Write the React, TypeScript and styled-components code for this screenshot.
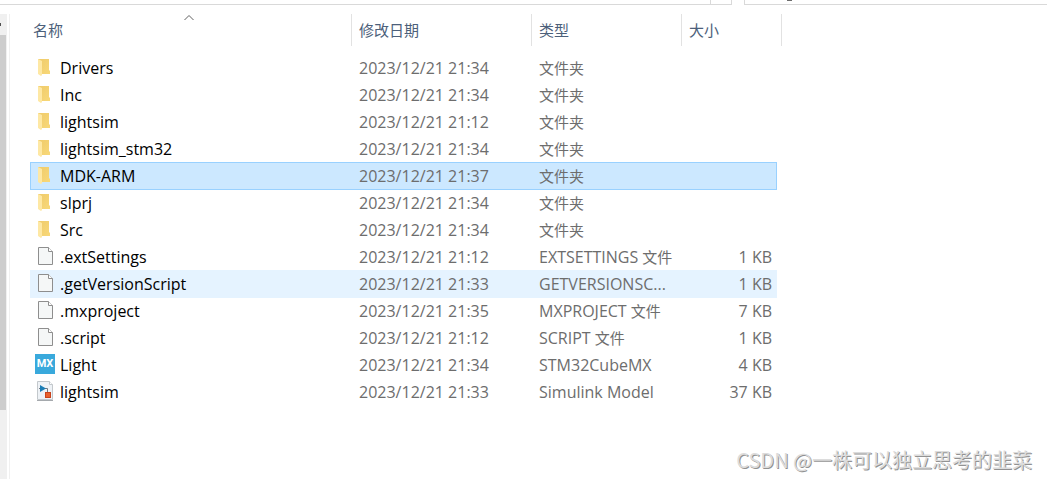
import React from "react";
import styled, { createGlobalStyle } from "styled-components";

const GlobalStyle = createGlobalStyle`
  * { box-sizing: border-box; }
  body {
    margin: 0;
    background: #fff;
    font-family: "Open Sans", "Noto Sans CJK SC", sans-serif;
    font-size: 15px;
    line-height: 20px;
  }
`;

const Explorer = styled.div`
  display: flex;
  flex-direction: column;
  min-height: 100vh;
  background: #fff;
`;

const TopBar = styled.header`
  display: flex;
  gap: 12px;
  height: 5px;
  margin-bottom: 9px;
`;

const AddressBox = styled.div`
  display: flex;
  justify-content: flex-end;
  flex: 0 0 732px;
  border: solid #d9d9d9;
  border-width: 0 1px 1px 0;
`;

const RefreshSlot = styled.div`
  width: 21px;
  border-left: 1px solid #d9d9d9;
`;

const SearchBox = styled.div`
  flex: 1;
  padding-left: 42px;
  border: solid #d9d9d9;
  border-width: 0 0 1px 1px;
`;

const SearchMark = styled.svg`
  display: block;
`;

const Body = styled.div`
  display: flex;
  flex: 1;
`;

const ScrollTrack = styled.div`
  display: flex;
  flex-direction: column;
  width: 7px;
  padding-right: 1px;
  background: #f0f0f0;
`;

const ScrollArrow = styled.div`
  display: flex;
  align-items: center;
  height: 21px;
`;

const ScrollThumb = styled.div`
  height: 375px;
  background: #cdcdcd;
`;

const Pane = styled.main`
  flex: 1;
  min-width: 0;
  margin-left: 2px;
  padding-left: 16px;
  border-left: 1px solid #f0f0f0;
`;

const Table = styled.table`
  width: 756px;
  table-layout: fixed;
  border-collapse: separate;
  border-spacing: 0;
`;

const Column = styled.col<{ $width: number }>`
  width: ${(p) => p.$width}px;
`;

const HeadCell = styled.th`
  position: relative;
  height: 32px;
  padding: 0 7px;
  border-right: 1px solid #e2e2e2;
  color: #4c607a;
  font-weight: 400;
  text-align: left;
`;

const SortMark = styled.svg`
  position: absolute;
  top: 0;
  left: 50%;
  transform: translateX(-50%);
`;

const Spacer = styled.tr`
  height: 8px;
`;

type RowState = "plain" | "selected" | "hover";

const Cell = styled.td<{ $align?: "right" }>`
  padding: 0 5px 0 7px;
  color: #6d6d6d;
  font-size: 16px;
  text-align: ${(p) => p.$align ?? "left"};
  white-space: nowrap;
`;

const NameCell = styled(Cell)`
  padding: 0 5px;
  color: #000;
`;

const rowLooks: Record<RowState, string> = {
  plain: "",
  hover: `
    ${Cell} { background: #e5f3ff; box-shadow: 0 1px #e5f3ff; }
  `,
  selected: `
    ${Cell} { background: #cce8ff; box-shadow: inset 0 1px #99d1ff, 0 1px #99d1ff; }
    ${NameCell} { box-shadow: inset 1px 1px #99d1ff, 0 1px #99d1ff; }
    ${Cell}:last-child { box-shadow: inset -1px 1px #99d1ff, 0 1px #99d1ff; }
  `,
};

const Row = styled.tr<{ $state: RowState }>`
  height: 27px;
  ${(p) => rowLooks[p.$state]}
`;

const EdgeCell = styled.td`
  padding: 0;
`;

const Han = styled.span`
  font-size: 15px;
`;

const NameLine = styled.div`
  display: flex;
  align-items: center;
  gap: 5px;
`;

const IconSlot = styled.span`
  display: flex;
  width: 20px;
  height: 20px;
  margin-bottom: 2px;
`;

const MxBadge = styled.span`
  width: 20px;
  height: 20px;
  background: #39a9dc;
  color: #fff;
  font: 700 11px/19px Roboto, sans-serif;
  text-align: center;
`;

const Watermark = styled.div`
  position: absolute;
  right: 15px;
  bottom: 5px;
  color: #dcdcdc;
  font-family: "Noto Sans CJK SC", sans-serif;
  font-size: 20px;
  line-height: 28px;
  text-shadow: 1px 1px 0 #929292;
`;

type Kind = "folder" | "file" | "mx" | "model";

const FolderIcon = () => (
  <svg width="20" height="20" viewBox="0 0 20 20" aria-hidden="true">
    <defs>
      <linearGradient id="folderBack" x1="0" x2="1" y1="0" y2="1">
        <stop offset="0" stopColor="#efcb6b" />
        <stop offset="1" stopColor="#f8d878" />
      </linearGradient>
    </defs>
    <path d="M3 2H14V13L15 14V17H3Z" fill="url(#folderBack)" />
    <path d="M3 2L7 4V18L6 19L3 17Z" fill="#fee8a4" />
  </svg>
);

const FileIcon = () => (
  <svg width="20" height="20" viewBox="0 0 20 20" aria-hidden="true">
    <path d="M3.5 1.5H13.5L17.5 5.5V18.5H3.5Z" fill="#fff" />
    <path d="M3.5 1.5H13.5L17.5 5.5V18.5H3.5Z" fill="#f5f7f7" stroke="#8e8e8e" />
    <path d="M13.5 1.5V5.5H17.5" fill="#fff" stroke="#8e8e8e" />
  </svg>
);

const ModelIcon = () => (
  <svg width="20" height="20" viewBox="0 0 20 20" aria-hidden="true">
    <path d="M2.5 .5H14.5L17.5 3.5V18.5H2.5Z" fill="#eef2f6" stroke="#c3c8cc" />
    <path d="M2 19.5H18" stroke="#a5a9ad" />
    <path d="M14.5 .5V3.5H17.5" fill="#fff" stroke="#c3c8cc" />
    <path d="M4 7.5H12.5V12" fill="none" stroke="#6e7780" />
    <path d="M5 4L11 7.5L5 11Z" fill="#1b7db5" />
    <rect x="10.5" y="11.5" width="5" height="5" fill="#e8602c" stroke="#c9431b" />
  </svg>
);

const KindIcon = ({ kind }: { kind: Kind }) => {
  if (kind === "mx") return <MxBadge>MX</MxBadge>;
  if (kind === "folder") return <FolderIcon />;
  if (kind === "model") return <ModelIcon />;
  return <FileIcon />;
};

interface Entry {
  name: string;
  date: string;
  type?: string;
  typeHan?: string;
  size?: string;
  kind: Kind;
  state?: RowState;
}

const folder = (name: string, time: string, state?: RowState): Entry => ({
  name,
  date: `2023/12/21 ${time}`,
  typeHan: "文件夹",
  kind: "folder",
  state,
});

const entries: Entry[] = [
  folder("Drivers", "21:34"),
  folder("Inc", "21:34"),
  folder("lightsim", "21:12"),
  folder("lightsim_stm32", "21:34"),
  folder("MDK-ARM", "21:37", "selected"),
  folder("slprj", "21:34"),
  folder("Src", "21:34"),
  { name: ".extSettings", date: "2023/12/21 21:12", type: "EXTSETTINGS ", typeHan: "文件", size: "1 KB", kind: "file" },
  { name: ".getVersionScript", date: "2023/12/21 21:33", type: "GETVERSIONSC...", size: "1 KB", kind: "file", state: "hover" },
  { name: ".mxproject", date: "2023/12/21 21:35", type: "MXPROJECT ", typeHan: "文件", size: "7 KB", kind: "file" },
  { name: ".script", date: "2023/12/21 21:12", type: "SCRIPT ", typeHan: "文件", size: "1 KB", kind: "file" },
  { name: "Light", date: "2023/12/21 21:34", type: "STM32CubeMX", size: "4 KB", kind: "mx" },
  { name: "lightsim", date: "2023/12/21 21:33", type: "Simulink Model", size: "37 KB", kind: "model" },
];

const columnWidths = [4, 322, 180, 150, 95, 5];

export default function App() {
  return (
    <Explorer>
      <GlobalStyle />
      <TopBar>
        <AddressBox>
          <RefreshSlot />
        </AddressBox>
        <SearchBox>
          <SearchMark width="6" height="1" aria-hidden="true">
            <path d="M0 0H5V1H0Z" fill="#6d6d6d" />
          </SearchMark>
        </SearchBox>
      </TopBar>
      <Body>
        <ScrollTrack>
          <ScrollArrow>
            <svg width="2" height="3" aria-hidden="true">
              <path d="M0 0H1V3H0Z" fill="#505050" />
            </svg>
          </ScrollArrow>
          <ScrollThumb />
        </ScrollTrack>
        <Pane>
          <Table>
            <colgroup>
              {columnWidths.map((w, i) => (
                <Column key={i} $width={w} />
              ))}
            </colgroup>
            <thead>
              <tr>
                <HeadCell colSpan={2} scope="col">
                  名称
                  <SortMark width="11" height="7" viewBox="0 0 11 7" aria-hidden="true">
                    <path d="M1 6L5.5 1.5L10 6" fill="none" stroke="#606060" />
                  </SortMark>
                </HeadCell>
                <HeadCell scope="col">修改日期</HeadCell>
                <HeadCell scope="col">类型</HeadCell>
                <HeadCell scope="col" colSpan={2}>大小</HeadCell>
              </tr>
            </thead>
            <tbody>
              <Spacer />
              {entries.map((e) => (
                <Row key={e.name + e.kind} $state={e.state ?? "plain"}>
                  <EdgeCell />
                  <NameCell>
                    <NameLine>
                      <IconSlot>
                        <KindIcon kind={e.kind} />
                      </IconSlot>
                      {e.name}
                    </NameLine>
                  </NameCell>
                  <Cell>{e.date}</Cell>
                  <Cell>
                    {e.type}
                    {e.typeHan && <Han>{e.typeHan}</Han>}
                  </Cell>
                  <Cell $align="right">{e.size}</Cell>
                </Row>
              ))}
            </tbody>
          </Table>
        </Pane>
      </Body>
      <Watermark>CSDN @一株可以独立思考的韭菜</Watermark>
    </Explorer>
  );
}
